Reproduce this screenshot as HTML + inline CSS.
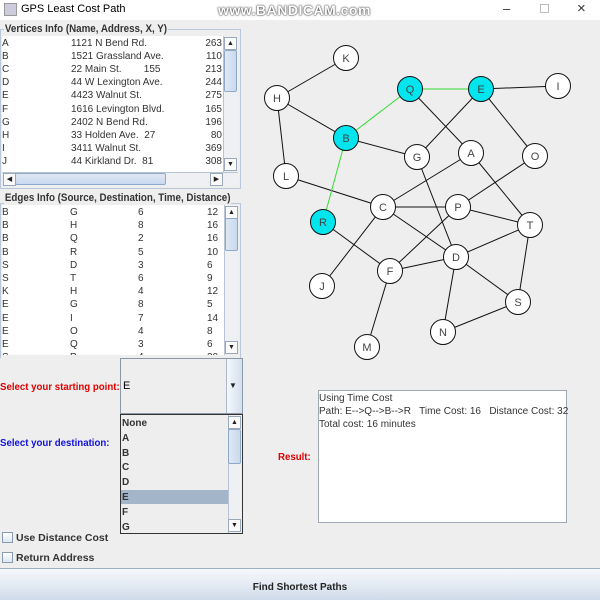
<!DOCTYPE html><html><head><style>
*{margin:0;padding:0;box-sizing:border-box}
body{width:600px;height:600px;background:#eeeeee;font-family:"Liberation Sans",sans-serif;font-size:10px;color:#333;position:relative;overflow:hidden}
.a{position:absolute;white-space:nowrap}
.b{font-weight:bold}
.sq{transform:scaleX(0.89);transform-origin:0 0}
.sl{transform:scaleX(0.92);transform-origin:0 0}
.sb{position:absolute;background:#eef0f3;border-left:1px solid #b8c4d2}
.thumb{position:absolute;background:linear-gradient(90deg,#dfe8f4,#c9d9ee);border:1px solid #8fa8c8;border-radius:2px}
.arr{position:absolute;width:13px;height:13px;background:#fafafa;border:1px solid #9aa8b8;font-size:7px;text-align:center;line-height:12px;color:#222}
</style></head><body>
<div class="a" style="left:0;top:0;width:600px;height:20px;background:#fff"></div>
<div class="a" style="left:4px;top:3px;width:13px;height:13px;background:#ccd;border:1px solid #999"></div>
<div class="a" style="left:21px;top:3px;font-size:11px;color:#000">GPS Least Cost Path</div>
<div class="a b" style="left:218px;top:2px;font-size:14px;color:#fff;text-shadow:0 0 2px #444,0 0 1px #000;letter-spacing:0.5px">www.BANDICAM.com</div>
<div class="a" style="left:503px;top:1px;font-size:13px;color:#333">&#8211;</div>
<div class="a" style="left:540px;top:4px;width:9px;height:9px;border:1px solid #bbb"></div>
<div class="a" style="left:577px;top:0px;font-size:15px;color:#333">&#215;</div>

<div class="a" style="left:0;top:29px;width:241px;height:160px;border:1px solid #b8c8da"></div>
<div class="a b sq" style="left:4px;top:23px;background:#eee;padding:0 1px;color:#333;font-size:11px">Vertices Info (Name, Address, X, Y)</div>
<div class="a" style="left:2px;top:36px;width:222px;height:136px;background:#fff"></div>
<div id="v"></div>
<div class="sb" style="left:223px;top:36px;width:15px;height:136px"></div>
<div class="arr" style="left:224px;top:37px">&#9650;</div>
<div class="arr" style="left:224px;top:158px">&#9660;</div>
<div class="thumb" style="left:224px;top:50px;width:13px;height:42px"></div>
<div class="a" style="left:2px;top:172px;width:236px;height:14px;background:#eef0f3;border-top:1px solid #b8c4d2"></div>
<div class="arr" style="left:3px;top:173px">&#9664;</div>
<div class="arr" style="left:210px;top:173px">&#9654;</div>
<div class="thumb" style="left:15px;top:173px;width:151px;height:12px;background:linear-gradient(#dfe8f4,#c9d9ee)"></div>

<div class="a" style="left:0;top:203px;width:241px;height:155px;border:1px solid #b8c8da;border-bottom:none"></div>
<div class="a b sq" style="left:4px;top:192px;background:#eee;padding:0 1px;color:#333;font-size:11px">Edges Info (Source, Destination, Time, Distance)</div>
<div class="a" style="left:2px;top:205px;width:222px;height:150px;background:#fff;overflow:hidden" id="e"></div>
<div class="sb" style="left:224px;top:205px;width:14px;height:150px"></div>
<div class="arr" style="left:225px;top:206px">&#9650;</div>
<div class="arr" style="left:225px;top:341px">&#9660;</div>
<div class="thumb" style="left:225px;top:218px;width:13px;height:33px"></div>

<div class="a b sl" style="left:0;top:381px;color:#e00000;font-size:10.5px">Select your starting point:</div>
<div class="a b sl" style="left:0;top:437px;color:#1010dd;font-size:10.5px">Select your destination:</div>
<div class="a b sl" style="left:278px;top:451px;color:#e00000;font-size:10.5px">Result:</div>

<div class="a" style="left:120px;top:358px;width:123px;height:56px;border:1px solid #8b98a8;background:#eeeeee"></div>
<div class="a" style="left:226px;top:359px;width:16px;height:54px;background:linear-gradient(90deg,#f4f7fb,#d5e0ee);border-left:1px solid #aab8c8"></div>
<div class="a" style="left:229px;top:381px;font-size:8px;color:#222">&#9660;</div>
<div class="a" style="left:123px;top:380px;color:#000;font-size:11px">E</div>
<div class="a" style="left:120px;top:414px;width:123px;height:120px;border:1px solid #333;background:#eeeeee"></div>
<div class="a" style="left:121px;top:490px;width:107px;height:14px;background:#a3b5c8"></div>
<div class="sb" style="left:228px;top:415px;width:14px;height:118px"></div>
<div class="arr" style="left:228px;top:416px">&#9650;</div>
<div class="arr" style="left:228px;top:519px">&#9660;</div>
<div class="thumb" style="left:228px;top:429px;width:13px;height:35px"></div>
<div class="a b" style="left:122px;top:417px;color:#333;line-height:14.8px">None<br>A<br>B<br>C<br>D<br>E<br>F<br>G</div>

<div class="a" style="left:2px;top:532px;width:11px;height:11px;border:1px solid #8a9bb0;background:linear-gradient(#fff,#dde6f0)"></div>
<div class="a b" style="left:16px;top:532px;font-size:10.5px">Use Distance Cost</div>
<div class="a" style="left:2px;top:552px;width:11px;height:11px;border:1px solid #8a9bb0;background:linear-gradient(#fff,#dde6f0)"></div>
<div class="a b" style="left:16px;top:552px;font-size:10.5px">Return Address</div>

<div class="a" style="left:318px;top:390px;width:249px;height:133px;background:#fff;border:1px solid #a0a8b4"></div>
<div class="a" style="left:319px;top:392px;line-height:13px;color:#333;font-size:10px">Using Time Cost<br>Path: E--&gt;Q--&gt;B--&gt;R&nbsp;&nbsp; Time Cost: 16&nbsp;&nbsp; Distance Cost: 32<br>Total cost: 16 minutes</div>

<div class="a" style="left:0;top:568px;width:600px;height:32px;border-top:1px solid #9eb0c4;background:linear-gradient(#f6f8fb,#e4ebf3 50%,#cfdbea)"></div>
<div class="a b" style="left:0;top:582px;width:600px;text-align:center;color:#222">Find Shortest Paths</div>

<svg class="a" style="left:0;top:0" width="600" height="600" id="g"></svg>
<script>
var V=[["A","1121 N Bend Rd.","263"],["B","1521 Grassland Ave.","110"],["C","22 Main St.&nbsp;&nbsp;&nbsp;&nbsp;&nbsp;&nbsp;&nbsp; 155","213"],["D","44 W Lexington Ave.","244"],["E","4423 Walnut St.","275"],["F","1616 Levington Blvd.","165"],["G","2402 N Bend Rd.","196"],["H","33 Holden Ave.&nbsp; 27","80"],["I","3411 Walnut St.","369"],["J","44 Kirkland Dr.&nbsp; 81","308"]];
var h="";V.forEach(function(r,i){var y=38+i*13.1;h+='<div class="a" style="left:2px;top:'+y+'px">'+r[0]+'</div><div class="a" style="left:71px;top:'+y+'px">'+r[1]+'</div><div class="a" style="right:378px;top:'+y+'px">'+r[2]+'</div>';});
document.getElementById("v").innerHTML=h;
var E=[["B","G",6,12],["B","H",8,16],["B","Q",2,16],["B","R",5,10],["S","D",3,6],["S","T",6,9],["K","H",4,12],["E","G",8,5],["E","I",7,14],["E","O",4,8],["E","Q",3,6],["S","P",4,20]];
h="";E.forEach(function(r,i){var y=2+i*13.2;h+='<div class="a" style="left:0;top:'+y+'px">'+r[0]+'</div><div class="a" style="left:68px;top:'+y+'px">'+r[1]+'</div><div class="a" style="left:136px;top:'+y+'px">'+r[2]+'</div><div class="a" style="left:205px;top:'+y+'px">'+r[3]+'</div>';});
document.getElementById("e").innerHTML=h;
var N={K:[346,58],H:[277,98],Q:[410,89],E:[481,89],I:[558,86],B:[346,138],G:[417,157],A:[471,153],O:[535,156],L:[286,176],C:[383,207],P:[458,207],R:[323,222],T:[530,225],D:[456,257],F:[390,271],J:[322,286],S:[518,302],N:[443,332],M:[367,347]};
var ed="KH HB HL EI BG QA EG EO LC CA CP CD CJ AT OP PT PF GD RF FD DT DS DN TS SN FM".split(" ");
var s="";ed.forEach(function(p){var a=N[p[0]],b=N[p[1]];s+='<line x1="'+a[0]+'" y1="'+a[1]+'" x2="'+b[0]+'" y2="'+b[1]+'" stroke="#111" stroke-width="1"/>';});
["BQ","QE","BR"].forEach(function(p){var a=N[p[0]],b=N[p[1]];s+='<line x1="'+a[0]+'" y1="'+a[1]+'" x2="'+b[0]+'" y2="'+b[1]+'" stroke="#33dd33" stroke-width="1"/>';});
for(var k in N){var c=N[k],f=("QEBR".indexOf(k)>=0)?"#00e5ee":"#fff";s+='<circle cx="'+c[0]+'" cy="'+c[1]+'" r="12.5" fill="'+f+'" stroke="#111"/><text x="'+c[0]+'" y="'+(c[1]+4)+'" text-anchor="middle" font-family="Liberation Sans" font-size="11" fill="#444">'+k+'</text>';}
document.getElementById("g").innerHTML=s;
</script>
</body></html>
